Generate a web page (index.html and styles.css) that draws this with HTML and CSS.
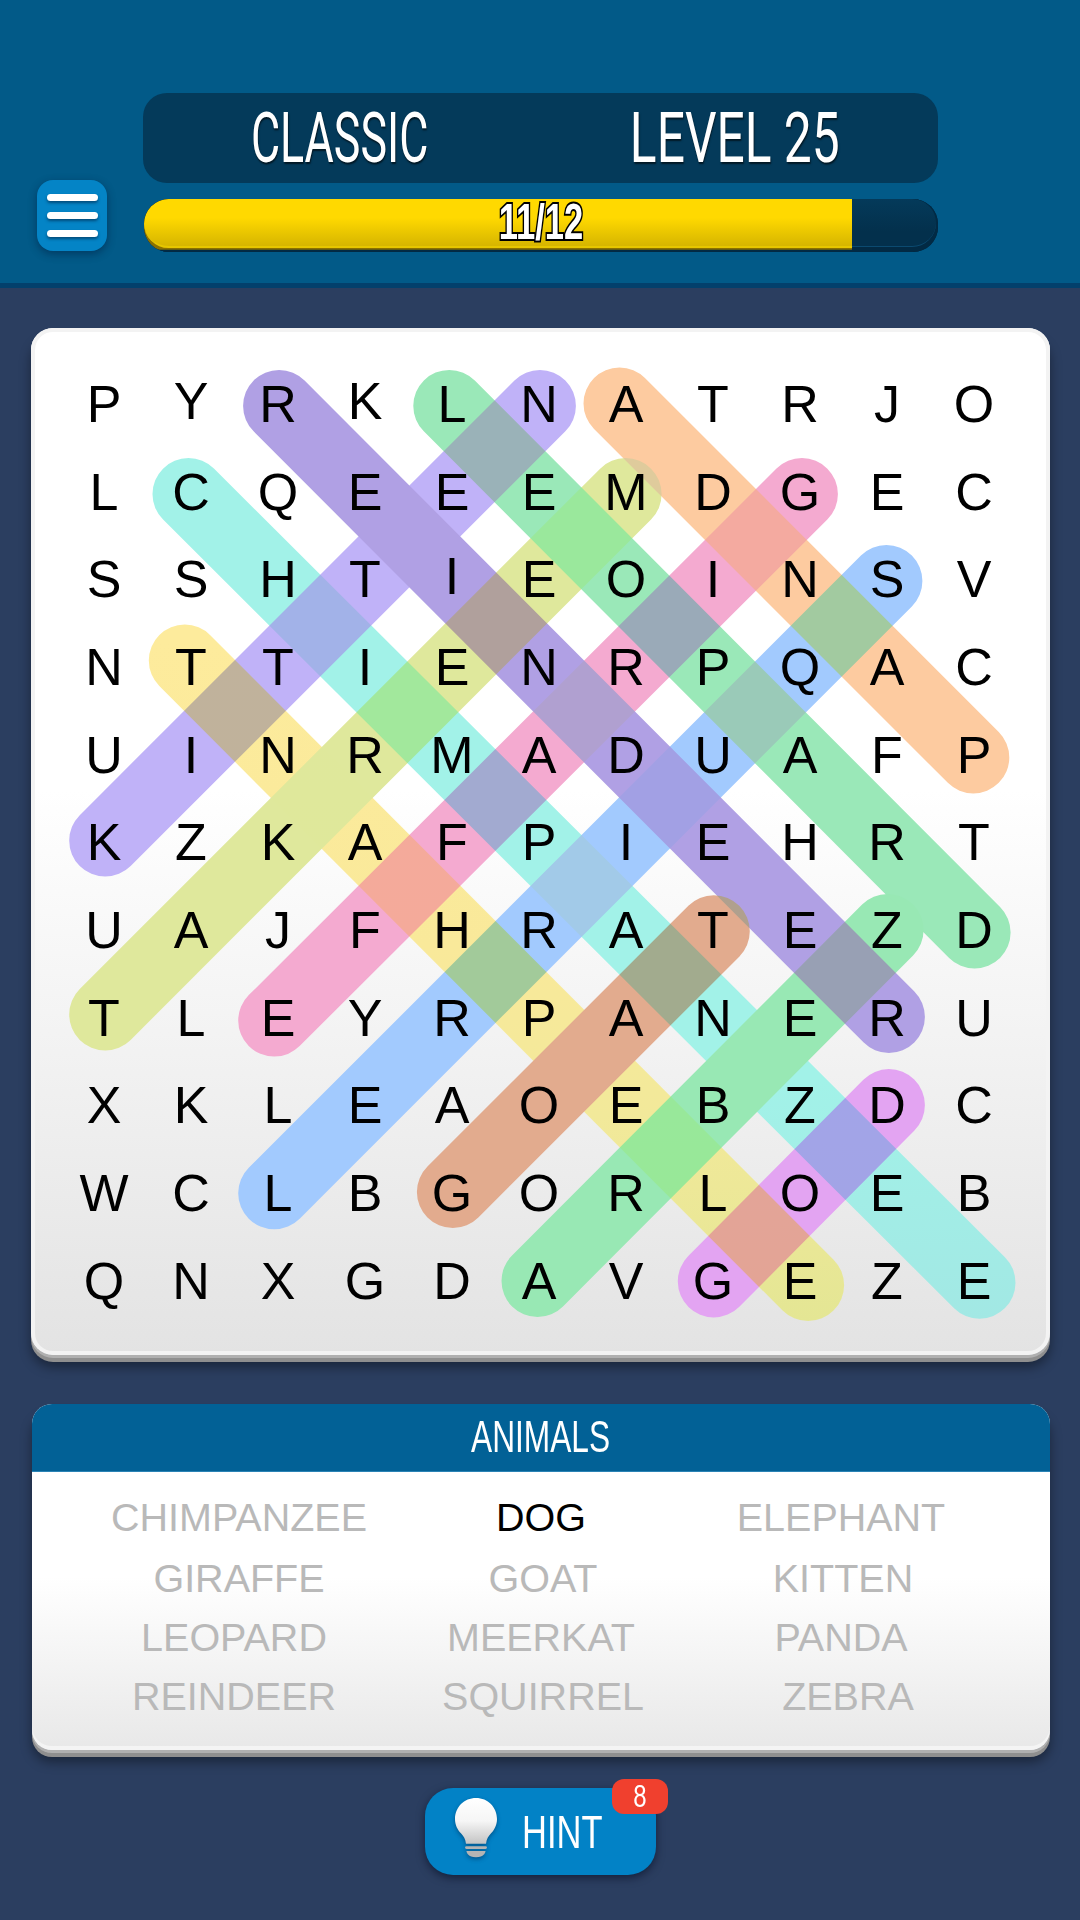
FILE: index.html
```html
<!DOCTYPE html>
<html lang="en">
<head>
<meta charset="utf-8">
<title>Word Search</title>
<link rel="stylesheet" href="styles.css">
</head>
<body>
<div class="page">
  <header class="top">
    <button class="menu" aria-label="Menu"><i></i><i></i><i></i></button>
    <div class="top-col">
      <div class="title-panel">
        <span class="title t-classic">CLASSIC</span>
        <span class="title t-level">LEVEL 25</span>
      </div>
      <div class="progress">
        <div class="track">
          <div class="progress-fill"></div>
        </div>
        <span class="progress-text">11/12</span>
      </div>
    </div>
  </header>
  <main class="main">
    <section class="board">
      <svg class="marks" viewBox="31 328 1018 1027" aria-hidden="true">
        <defs>
          <linearGradient id="yellowFade" gradientUnits="userSpaceOnUse" x1="0" y1="640" x2="0" y2="1320">
            <stop offset="0" stop-color="#fdeb9c"/>
            <stop offset="0.45" stop-color="#f9e99a"/>
            <stop offset="0.7" stop-color="#f2e99a"/>
            <stop offset="1" stop-color="#e4e694"/>
          </linearGradient>
          <linearGradient id="tealFade" gradientUnits="userSpaceOnUse" x1="0" y1="460" x2="0" y2="1320">
            <stop offset="0" stop-color="#a2f2e8"/>
            <stop offset="0.72" stop-color="#a2f2e8"/>
            <stop offset="1" stop-color="#a2e8e4"/>
          </linearGradient>
        </defs>
        <line class="m lilac" x1="104.7" y1="840.6" x2="539.4" y2="405.9"/>
        <line class="m violet" x1="278.6" y1="405.9" x2="888.4" y2="1016.9"/>
        <line class="m green" x1="448.8" y1="405.9" x2="974.1" y2="932.5"/>
        <line class="m orange" x1="619" y1="403.5" x2="972.8" y2="757.4"/>
        <line class="m pink" x1="801.4" y1="494.1" x2="273.7" y2="1020.6"/>
        <line class="m lime" x1="625.1" y1="494.1" x2="104.7" y2="1014.5"/>
        <line class="m" stroke="url(#tealFade)" x1="188" y1="494.1" x2="979" y2="1282.7"/>
        <line class="m" stroke="url(#yellowFade)" x1="184.3" y1="660.6" x2="807.6" y2="1285.1"/>
        <line class="m blue" x1="885.9" y1="581" x2="273.7" y2="1193.3"/>
        <line class="m brown" x1="713.3" y1="931.2" x2="452.4" y2="1192"/>
        <line class="m green2" x1="887.1" y1="930" x2="537" y2="1281"/>
        <line class="m magenta" x1="888.4" y1="1105.1" x2="713.3" y2="1281.4"/>
      </svg>
      <div class="grid">
        <span>P</span><span class="u">Y</span><span>R</span><span class="u">K</span><span>L</span><span>N</span><span>A</span><span>T</span><span>R</span><span>J</span><span>O</span>
        <span>L</span><span>C</span><span>Q</span><span>E</span><span>E</span><span>E</span><span>M</span><span>D</span><span>G</span><span>E</span><span>C</span>
        <span>S</span><span>S</span><span>H</span><span>T</span><span class="u">I</span><span>E</span><span>O</span><span>I</span><span>N</span><span>S</span><span>V</span>
        <span>N</span><span>T</span><span>T</span><span>I</span><span>E</span><span>N</span><span>R</span><span>P</span><span>Q</span><span>A</span><span>C</span>
        <span>U</span><span>I</span><span>N</span><span>R</span><span>M</span><span>A</span><span>D</span><span>U</span><span>A</span><span>F</span><span>P</span>
        <span>K</span><span>Z</span><span>K</span><span>A</span><span>F</span><span>P</span><span>I</span><span>E</span><span>H</span><span>R</span><span>T</span>
        <span>U</span><span>A</span><span>J</span><span>F</span><span>H</span><span>R</span><span>A</span><span>T</span><span>E</span><span>Z</span><span>D</span>
        <span>T</span><span>L</span><span>E</span><span>Y</span><span>R</span><span>P</span><span>A</span><span>N</span><span>E</span><span>R</span><span>U</span>
        <span>X</span><span>K</span><span>L</span><span>E</span><span>A</span><span>O</span><span>E</span><span>B</span><span>Z</span><span>D</span><span>C</span>
        <span>W</span><span>C</span><span>L</span><span>B</span><span>G</span><span>O</span><span>R</span><span>L</span><span>O</span><span>E</span><span>B</span>
        <span>Q</span><span>N</span><span>X</span><span>G</span><span>D</span><span>A</span><span>V</span><span>G</span><span>E</span><span>Z</span><span>E</span>
      </div>
    </section>
    <section class="words">
      <h2 class="words-head"><span>ANIMALS</span></h2>
      <div class="word-list">
        <span class="w">CHIMPANZEE</span><span class="w on">DOG</span><span class="w sl2">ELEPHANT</span>
        <span class="w">GIRAFFE</span><span class="w sr2">GOAT</span><span class="w">KITTEN</span>
        <span class="w sl5">LEOPARD</span><span class="w">MEERKAT</span><span class="w sl2">PANDA</span>
        <span class="w sl5">REINDEER</span><span class="w sr2">SQUIRREL</span><span class="w sr5">ZEBRA</span>
      </div>
    </section>
    <button class="hint">
      <svg class="bulb" viewBox="0 0 48 66" aria-hidden="true">
        <defs>
          <linearGradient id="glass" x1="0" y1="0" x2="0" y2="1">
            <stop offset="0" stop-color="#ffffff"/>
            <stop offset="0.5" stop-color="#f6f6f6"/>
            <stop offset="1" stop-color="#c4c4c4"/>
          </linearGradient>
        </defs>
        <path fill="url(#glass)" d="M24 1C11.500 1 2 10.600 2 23c0 6.500 2.700 11.200 6.200 15 2.800 3 4.800 6 5.300 11h21c.5-5 2.500-8 5.300-11C43.300 34.200 46 29.500 46 23 46 10.600 36.500 1 24 1z"/>
        <path class="bulb-base" d="M14 51.500h20a1.500 1.500 0 0 1 0 3H14a1.500 1.500 0 0 1 0-3zM14 56.500h20c0 1.500-1 3-2 4-1.500 1.500-3.500 2.500-8 2.500s-6.500-1-8-2.500c-1-1-2-2.500-2-4z"/>
      </svg>
      <span class="hint-text">HINT</span>
      <span class="badge"><span class="badge-num">8</span></span>
    </button>
  </main>
</div>
</body>
</html>
```
FILE: styles.css
```css
* { box-sizing: border-box; }
html, body { margin: 0; padding: 0; }
body { background: #2b3e60; font-family: "Liberation Sans", Arial, sans-serif; }
.page { width: 1080px; height: 1920px; overflow: hidden; display: flex; flex-direction: column; background: #2b3e60; }

/* header */
.top { height: 288px; flex: none; background: #025a88; border-bottom: 5px solid #03406c; padding: 93px 0 31px 37px; display: flex; align-items: flex-end; gap: 36px; }
.menu { width: 70px; height: 71px; margin-bottom: 1px; border: 0; border-radius: 16px; padding: 14px 9px 14px 10px; background: #0484c6; display: flex; flex-direction: column; justify-content: space-between; box-shadow: 0 3px 8px rgba(0, 20, 50, .45); }
.menu i { display: block; height: 7px; border-radius: 4px; background: #fff; box-shadow: 0 2px 3px rgba(0, 30, 60, .55); }
.top-col { width: 795px; display: flex; flex-direction: column; gap: 16px; }
.title-panel { height: 90px; border-radius: 24px; background: #043a5a; display: grid; grid-template-columns: 1fr 1fr; align-items: center; justify-items: center; }
.title { font-family: Roboto, "Liberation Sans", sans-serif; font-weight: 400; font-size: 70px; line-height: 90px; color: #fff; text-shadow: 1px 2px 2px rgba(0, 0, 0, .6); }
.t-classic { transform: translateX(-2px) scaleX(.64); }
.t-level { transform: translateX(-4px) scaleX(.71); }
.progress { position: relative; height: 53px; margin-left: 1px; border-radius: 25px; background: #022338; }
.track { height: 53px; border-radius: 25px; overflow: hidden; background: #022a44; }
.track::before { content: ""; position: absolute; right: 2px; top: 0; width: 100px; height: 47px; border-radius: 0 25px 25px 0; background: linear-gradient(#043a5a, #03304c 70%); border-bottom: 1px solid #0b4a70; }
.progress-fill { position: relative; width: 708px; height: 53px; background: linear-gradient(#9a7d00, #8a7000 95%, #022a44 96%); }
.progress-fill::before { content: ""; display: block; height: 47px; border-radius: 25px 0 0 25px; background: linear-gradient(#ffd900 0, #ffd900 40%, #d6b500 100%); border-bottom: 2px solid #e6c600; }
.progress-text { position: absolute; left: 0; right: 0; top: -1px; text-align: center; font-weight: 700; font-size: 50px; line-height: 48px; color: #fff; -webkit-text-stroke: 4px #000; paint-order: stroke fill; transform: scaleX(.69); }

/* board */
.main { flex: 1; padding: 40px 30px 0 31px; display: flex; flex-direction: column; align-items: stretch; }
.board { position: relative; height: 1027px; border-radius: 22px; padding: 32px 29.500px 0; background: linear-gradient(#fff 45%, #e3e3e3 100%); box-shadow: inset 0 0 0 4px #f3f3f3, 0 3px 0 #b0b0b0, 0 7px 0 #8f8f8f, 0 12px 12px rgba(0, 0, 0, .4); }
.marks { position: absolute; left: 0; top: 0; width: 100%; height: 100%; isolation: isolate; }
.m { stroke-width: 72; stroke-linecap: round; mix-blend-mode: darken; }
.lilac { stroke: #c0b2f8; }
.violet { stroke: #b0a0e4; }
.green { stroke: #9ae8b8; }
.orange { stroke: #fdcba0; }
.pink { stroke: #f4aad0; }
.lime { stroke: #dfe89c; }
.blue { stroke: #a2cafe; }
.brown { stroke: #e2ab8e; }
.green2 { stroke: #98e8b4; }
.magenta { stroke: #e3a4f2; }
.grid { position: relative; display: grid; grid-template-columns: repeat(11, 87px); grid-template-rows: repeat(11, 87.700px); align-items: center; justify-items: center; font-size: 52px; line-height: 1; color: #000; }
.u { transform: translateY(-3px); }

/* word list */
.words { margin-top: 49px; height: 346px; flex: none; margin-left: 1px; border-radius: 20px; background: linear-gradient(#fff 50%, #e8e8e8 100%); box-shadow: inset 0 -4px 0 #f4f4f4, 0 3px 0 #b0b0b0, 0 7px 0 #8f8f8f, 0 12px 12px rgba(0, 0, 0, .4); }
.words-head { margin: 0; height: 68px; border-radius: 20px 20px 0 0; background: #026196; border-bottom: 1px solid #2a83b5; color: #fff; font-weight: 400; font-size: 44px; line-height: 66px; text-align: center; }
.words-head span { display: inline-block; transform: scaleX(.72); }
.word-list { display: grid; grid-template-columns: repeat(3, 302px); grid-template-rows: 60px 61px 58px 60px; padding: 16px 0 0 56px; align-items: center; justify-items: center; font-size: 39.500px; color: #b9b9b9; }
.w { line-height: 1; }
.on { color: #000; }
.sl5 { transform: translateX(-5px); }
.sl2 { transform: translateX(-2px); }
.sr2 { transform: translateX(2px); }
.sr5 { transform: translateX(5px); }

/* hint */
.hint { position: relative; align-self: center; margin-top: 38px; width: 231px; height: 87px; border: 0; border-radius: 28px; padding: 0 0 0 28px; background: #0282c6; display: flex; align-items: center; gap: 23px; box-shadow: 0 3px 8px rgba(0, 10, 30, .55); }
.bulb { width: 46px; height: 63px; flex: none; margin-bottom: 6px; filter: drop-shadow(0 2px 2px rgba(0, 30, 70, .45)); }
.bulb-base { fill: #b4b4b4; }
.hint-text { font-size: 46px; line-height: 1; color: #fff; display: inline-block; transform: scaleX(.75); transform-origin: left center; }
.badge { position: absolute; right: -12px; top: -9px; width: 56px; height: 35px; border-radius: 12px; background: #f0402e; color: #fff; font-size: 32px; line-height: 35px; text-align: center; }
.badge-num { display: inline-block; transform: scaleX(.75); }
```
